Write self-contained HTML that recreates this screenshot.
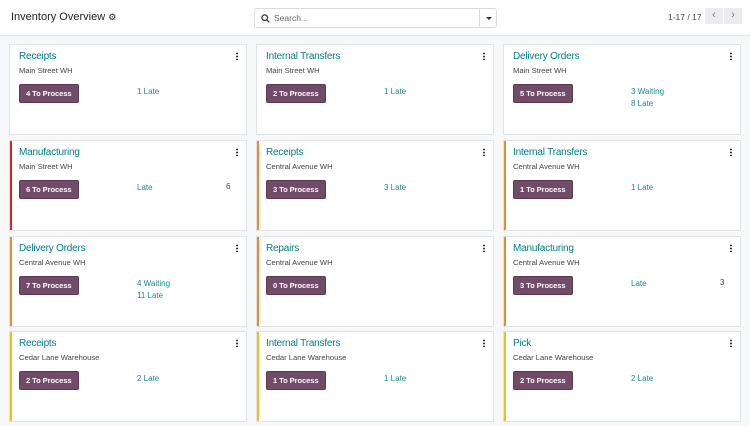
<!DOCTYPE html>
<html><head><style>
*{margin:0;padding:0;box-sizing:border-box}
body{width:750px;height:426px;overflow:hidden;background:#f7f8f9;font-family:"Liberation Sans",sans-serif;position:relative;color:#374151}
.hdr{position:absolute;left:0;top:0;width:750px;height:36px;background:#fff;border-bottom:1px solid #e2e4e7}
.title{position:absolute;left:11px;top:11px;font-size:11px;color:#222}
.search{position:absolute;left:254px;top:8px;width:243px;height:20px;border:1px solid #d8dadd;border-radius:3px;background:#fff}
.search .ph{position:absolute;left:19px;top:4px;font-size:8.5px;color:#666}
.search .dd{position:absolute;right:0;top:0;width:17px;height:18px;border-left:1px solid #d8dadd}
.pager{position:absolute;left:668px;top:12px;font-size:8.5px;color:#444}
.pbtn{position:absolute;top:8px;width:18px;height:16px;background:#e9ebee;color:#777;font-size:11px;text-align:center;line-height:15px}
.card{position:absolute;width:238px;background:#fff;border:1px solid #e0e2e5}
.card .t{position:absolute;left:9px;top:6px;font-size:10px;color:#017e84;letter-spacing:-0.2px}
.card .s{position:absolute;left:9px;top:21px;font-size:7.6px;color:#444}
.card .b{position:absolute;left:9px;top:39px;height:19px;padding:0 6px;background:#714b67;border:1px solid #5a3a52;color:#fff;font-size:7.6px;font-weight:bold;line-height:17px;border-radius:2px;letter-spacing:-0.1px}
.card .l{position:absolute;left:127px;top:41px;font-size:8px;color:#1a8a8f;line-height:12px}
.card .n{position:absolute;left:216px;top:41px;font-size:8px;color:#444}
.card .k{position:absolute;right:8px;top:7px;width:2px;height:8px;background:
radial-gradient(circle,#333 0.9px,transparent 1px) 0 0/2px 3px}
.red{box-shadow:inset 2px 0 0 #e52020}.or{box-shadow:inset 2px 0 0 #ef8a2a}.ye{box-shadow:inset 2px 0 0 #f0c020}
</style></head><body>
<div class="hdr">
<div class="title">Inventory Overview <span style="font-size:9px">&#9881;</span></div>
<div class="search"><svg style="position:absolute;left:6px;top:5px" width="9" height="9" viewBox="0 0 9 9"><circle cx="3.7" cy="3.7" r="2.8" fill="none" stroke="#333" stroke-width="1.2"/><path d="M5.8 5.8L8.3 8.3" stroke="#333" stroke-width="1.3"/></svg><span class="ph">Search...</span><div class="dd"><svg style="position:absolute;left:6px;top:8px" width="6" height="3"><path d="M0 0H6L3 3Z" fill="#333"/></svg></div></div>
<div class="pager">1-17 / 17</div>
<div class="pbtn" style="left:705px">&#8249;</div><div class="pbtn" style="left:724px">&#8250;</div>
</div>

<div class="card" style="left:9px;top:44px;height:91px"><div class="t">Receipts</div><div class="s">Main Street WH</div><div class="b">4 To Process</div><div class="l">1 Late</div><div class="k"></div></div>
<div class="card" style="left:256px;top:44px;height:91px"><div class="t">Internal Transfers</div><div class="s">Main Street WH</div><div class="b">2 To Process</div><div class="l">1 Late</div><div class="k"></div></div>
<div class="card" style="left:503px;top:44px;height:91px"><div class="t">Delivery Orders</div><div class="s">Main Street WH</div><div class="b">5 To Process</div><div class="l">3 Waiting<br>8 Late</div><div class="k"></div></div>

<div class="card red" style="left:9px;top:140px;height:91px"><div class="t">Manufacturing</div><div class="s">Main Street WH</div><div class="b">6 To Process</div><div class="l">Late</div><div class="n">6</div><div class="k"></div></div>
<div class="card or" style="left:256px;top:140px;height:91px"><div class="t">Receipts</div><div class="s">Central Avenue WH</div><div class="b">3 To Process</div><div class="l">3 Late</div><div class="k"></div></div>
<div class="card or" style="left:503px;top:140px;height:91px"><div class="t">Internal Transfers</div><div class="s">Central Avenue WH</div><div class="b">1 To Process</div><div class="l">1 Late</div><div class="k"></div></div>

<div class="card or" style="left:9px;top:236px;height:91px"><div class="t">Delivery Orders</div><div class="s">Central Avenue WH</div><div class="b">7 To Process</div><div class="l">4 Waiting<br>11 Late</div><div class="k"></div></div>
<div class="card or" style="left:256px;top:236px;height:91px"><div class="t">Repairs</div><div class="s">Central Avenue WH</div><div class="b">0 To Process</div><div class="k"></div></div>
<div class="card or" style="left:503px;top:236px;height:91px"><div class="t">Manufacturing</div><div class="s">Central Avenue WH</div><div class="b">3 To Process</div><div class="l">Late</div><div class="n">3</div><div class="k"></div></div>

<div class="card ye" style="left:9px;top:331px;height:91px"><div class="t">Receipts</div><div class="s">Cedar Lane Warehouse</div><div class="b">2 To Process</div><div class="l">2 Late</div><div class="k"></div></div>
<div class="card ye" style="left:256px;top:331px;height:91px"><div class="t">Internal Transfers</div><div class="s">Cedar Lane Warehouse</div><div class="b">1 To Process</div><div class="l">1 Late</div><div class="k"></div></div>
<div class="card ye" style="left:503px;top:331px;height:91px"><div class="t">Pick</div><div class="s">Cedar Lane Warehouse</div><div class="b">2 To Process</div><div class="l">2 Late</div><div class="k"></div></div>
</body></html>
